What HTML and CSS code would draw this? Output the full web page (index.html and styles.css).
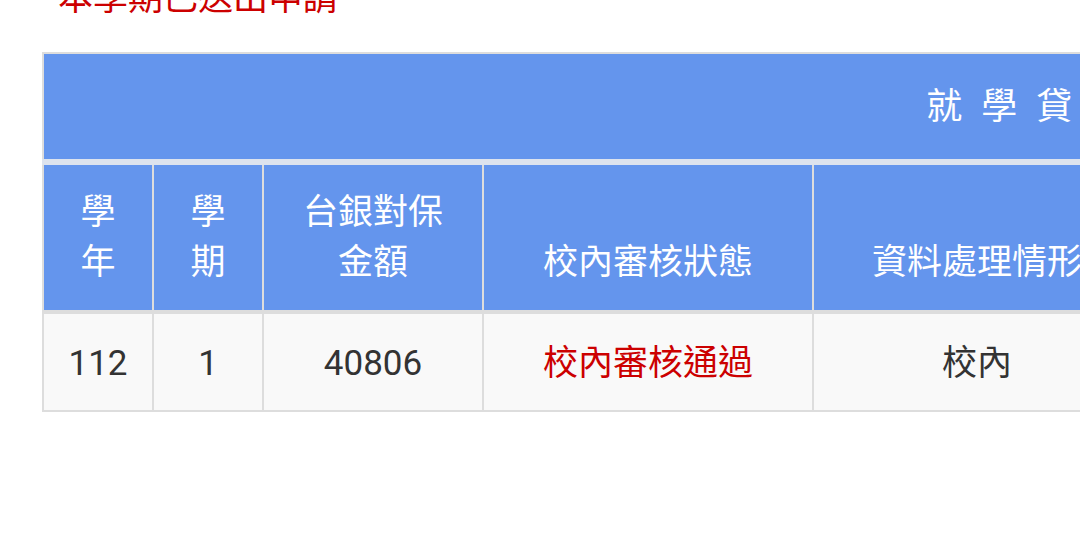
FILE: index.html
```html
<!DOCTYPE html>
<html lang="zh-Hant">
<head>
<meta charset="utf-8">
<title>就學貸款申請紀錄</title>
<link rel="stylesheet" href="styles.css">
</head>
<body>
<div class="page">
  <p class="notice">本學期已送出申請</p>
  <table class="loan-table">
    <colgroup>
      <col class="c-year">
      <col class="c-term">
      <col class="c-amount">
      <col class="c-status">
      <col class="c-process">
      <col class="c-extra">
      <col class="c-extra">
    </colgroup>
    <thead>
      <tr>
        <th class="title" colspan="7">就 學 貸 款 申 請 紀 錄</th>
      </tr>
      <tr class="head-row">
        <th>學<br>年</th>
        <th>學<br>期</th>
        <th>台銀對保<br>金額</th>
        <th>校內審核狀態</th>
        <th>資料處理情形</th>
        <th>申請日期</th>
        <th>備註</th>
      </tr>
    </thead>
    <tbody>
      <tr class="data-row">
        <td>112</td>
        <td>1</td>
        <td>40806</td>
        <td class="pass">校內審核通過</td>
        <td>校內</td>
        <td>2023/09/01</td>
        <td></td>
      </tr>
    </tbody>
  </table>
</div>
</body>
</html>
```

FILE: styles.css
```css
html, body {
  margin: 0;
  padding: 0;
  background: #ffffff;
  overflow: hidden;
}

body {
  font-family: Roboto, "Noto Sans CJK TC", sans-serif;
  color: #333333;
}

.page {
  padding-left: 42px;
}

.notice {
  margin: -26px 0 0 16px;
  height: 78px;
  font-size: 35px;
  line-height: 50px;
  color: #cc0000;
}

.loan-table {
  border-collapse: collapse;
  width: 2192px;
  table-layout: fixed;
  border: 2px solid #dddddd;
}

.c-year { width: 110px; }
.c-term { width: 110px; }
.c-amount { width: 220px; }
.c-status { width: 330px; }
.c-process { width: 328px; }
.c-extra { width: 547px; }

.loan-table th,
.loan-table td {
  border: 2px solid #dddddd;
  font-size: 35px;
  line-height: 50px;
  text-align: center;
  font-weight: normal;
  white-space: nowrap;
  overflow: hidden;
}

.loan-table th {
  background: #6495ed;
  color: #ffffff;
  vertical-align: bottom;
  padding: 23px 10px 22px;
}

.loan-table th.title {
  padding: 28px 10px 27px;
  font-size: 36px;
  letter-spacing: 5px;
  border-bottom: 6px solid #dde3ee;
}

.head-row th {
  border-bottom: 4px solid #dddddd;
}

.data-row td {
  background: #f9f9f9;
  padding: 25px 10px 21px;
  vertical-align: middle;
}

.data-row td.pass {
  color: #cc0000;
}
```
